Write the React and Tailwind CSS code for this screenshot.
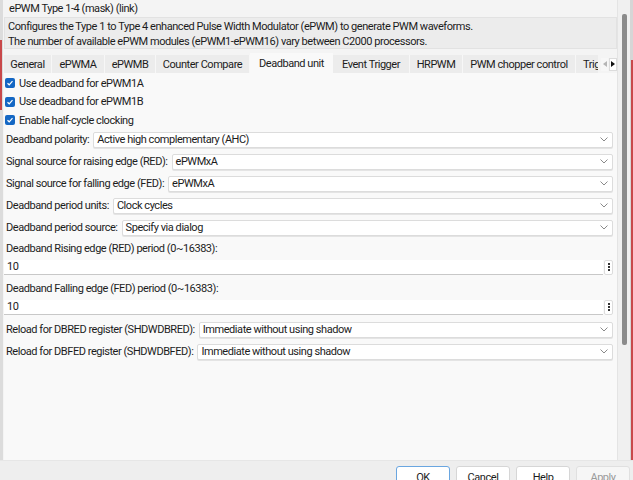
import React from "react";

const tabs = [
  { label: "General", w: 48 },
  { label: "ePWMA", w: 53 },
  { label: "ePWMB", w: 51 },
  { label: "Counter Compare", w: 94 },
  { label: "Deadband unit", w: 83, active: true },
  { label: "Event Trigger", w: 77 },
  { label: "HRPWM", w: 53 },
  { label: "PWM chopper control", w: 113 },
  { label: "Trigger", w: 25 },
];

const Chevron = () => (
  <svg width="8" height="5" viewBox="0 0 8 5" className="shrink-0">
    <path d="M0.5 0.5 L4 4 L7.5 0.5" fill="none" stroke="#8a8a8a" strokeWidth="1" />
  </svg>
);

const Check = ({ label }) => (
  <div className="flex items-center h-[18.5px] pl-[1px]">
    <div className="w-[10px] h-[10px] rounded-[2px] bg-[#1467c4] flex items-center justify-center">
      <svg width="8" height="8" viewBox="0 0 8 8">
        <path d="M1.5 4.2 L3.2 5.8 L6.5 2.2" fill="none" stroke="white" strokeWidth="1.2" />
      </svg>
    </div>
    <span className="ml-[4px]">{label}</span>
  </div>
);

const SelectRow = ({ label, value, mt = "mt-[6px]" }) => (
  <div className={`flex items-center h-[16px] ${mt}`}>
    <span className="pl-[2px] whitespace-nowrap">{label}</span>
    <div className="ml-[4px] flex-1 h-[16px] bg-white border border-[#dcdcdc] rounded-[2px] flex items-center pl-[3px] pr-[4px] shadow-[0_1px_0_#e4e4e4]">
      <span className="flex-1">{value}</span>
      <Chevron />
    </div>
  </div>
);

const InputRow = ({ label, value }) => (
  <div className="flex flex-col">
    <div className="pl-[2px] h-[16px] flex items-center">{label}</div>
    <div className="flex items-center mt-[3px] h-[15px]">
      <div className="flex-1 h-[15px] bg-white border-b border-[#c8c8c8] flex items-center pl-[3px]">{value}</div>
      <div className="ml-[1px] w-[9px] h-[15px] bg-white border border-[#dcdcdc] rounded-[2px] flex flex-col items-center justify-center gap-[1px]">
        <div className="w-[2px] h-[2px] bg-[#333]" />
        <div className="w-[2px] h-[2px] bg-[#333]" />
        <div className="w-[2px] h-[2px] bg-[#333]" />
      </div>
    </div>
  </div>
);

export default function App() {
  return (
    <div className="w-[633px] h-[480px] bg-[#f0f0f0] flex flex-col overflow-hidden text-[11px] leading-[15px] text-[#1c1c1c] font-['Roboto','Liberation_Sans',sans-serif] tracking-[-0.45px]">
      <div className="flex h-[460px]">
        {/* window edge */}
        <div className="w-[3px] bg-[#dcdcdc] flex flex-col">
          <div className="h-[40px]" />
          <div className="h-[70px] w-[2px] bg-[#c8484a]" />
        </div>
        <div className="w-[614px] pl-[1px] flex flex-col bg-[#f4f4f4]">
          <div className="h-[17px] pl-[5px] pt-[1px]">ePWM Type 1-4 (mask) (link)</div>
          <div className="h-[32px] bg-[#ececec] border border-[#e2e2e2] pl-[3px] pt-[1px] leading-[15px]">
            <div>Configures the Type 1 to Type 4 enhanced Pulse Width Modulator (ePWM) to generate PWM waveforms.</div>
            <div>The number of available ePWM modules (ePWM1-ePWM16) vary between C2000 processors.</div>
          </div>
          {/* tabs */}
          <div className="mt-[5px] h-[19px] flex items-end">
            <div className="flex items-end overflow-hidden w-[597px]">
              {tabs.map((t) => (
                <div
                  key={t.label}
                  style={{ width: t.w }}
                  className={
                    t.active
                      ? "shrink-0 h-[20px] bg-[#f9f9f9] flex items-center justify-center whitespace-nowrap"
                      : "shrink-0 h-[18px] bg-[#ececec] border-r border-[#f7f7f7] flex items-center justify-center whitespace-nowrap overflow-hidden"
                  }
                >
                  {t.label === "Trigger" ? <span className="pl-[7px] w-full overflow-hidden">Trigger</span> : t.label}
                </div>
              ))}
            </div>
            <div className="flex h-[18px] items-center gap-[1px] pl-[3px]">
              <div className="w-[7px] h-[13px] bg-[#f7f7f7] flex items-center justify-center text-[#b5b5b5]">
                <svg width="4" height="6" viewBox="0 0 4 6"><path d="M4 0 L0 3 L4 6 Z" fill="#b5b5b5" /></svg>
              </div>
              <div className="w-[8px] h-[13px] bg-white border border-[#dcdcdc] flex items-center justify-center">
                <svg width="4" height="6" viewBox="0 0 4 6"><path d="M0 0 L4 3 L0 6 Z" fill="#111" /></svg>
              </div>
            </div>
          </div>
          {/* panel */}
          <div className="flex-1 bg-[#f9f9f9] pr-[4px] pt-[1px]">
            <div className="flex flex-col">
              <Check label="Use deadband for ePWM1A" />
              <Check label="Use deadband for ePWM1B" />
              <Check label="Enable half-cycle clocking" />
              <SelectRow mt="mt-[2px]" label="Deadband polarity:" value="Active high complementary (AHC)" />
              <SelectRow label="Signal source for raising edge (RED):" value="ePWMxA" />
              <SelectRow label="Signal source for falling edge (FED):" value="ePWMxA" />
              <SelectRow label="Deadband period units:" value="Clock cycles" />
              <SelectRow label="Deadband period source:" value="Specify via dialog" />
              <div className="mt-[5px]">
                <InputRow label="Deadband Rising edge (RED) period (0~16383):" value="10" />
              </div>
              <div className="mt-[6px]">
                <InputRow label="Deadband Falling edge (FED) period (0~16383):" value="10" />
              </div>
              <SelectRow mt="mt-[7px]" label="Reload for DBRED register (SHDWDBRED):" value="Immediate without using shadow" />
              <SelectRow label="Reload for DBFED register (SHDWDBFED):" value="Immediate without using shadow" />
            </div>
          </div>
        </div>
        {/* scrollbar */}
        <div className="w-[13px] bg-[#f0f0f0] border-l border-[#e4e4e4] flex justify-center pt-[14px]">
          <div className="w-[5px] h-[331px] rounded-[2px] bg-[#8b8b8b]" />
        </div>
        <div className="w-[3px] bg-[#d6d6d6] flex flex-col">
          <div className="h-[60px]" />
          <div className="h-[400px] w-[2px] ml-[1px] bg-[#c8484a]" />
        </div>
      </div>
      {/* bottom buttons */}
      <div className="flex-1 bg-[#eeeeee] border-t border-[#e6e6e6] flex justify-end items-start pt-[5px] pr-[3px] gap-[6px]">
        <div className="w-[54px] h-[22px] bg-white border border-[#6aa6e0] rounded-[3px] flex items-center justify-center">OK</div>
        <div className="w-[54px] h-[22px] bg-white border border-[#d6d6d6] rounded-[3px] flex items-center justify-center">Cancel</div>
        <div className="w-[54px] h-[22px] bg-white border border-[#d6d6d6] rounded-[3px] flex items-center justify-center">Help</div>
        <div className="w-[54px] h-[22px] bg-[#f6f6f6] border border-[#e0e0e0] rounded-[3px] flex items-center justify-center text-[#9a9a9a]">Apply</div>
      </div>
    </div>
  );
}
